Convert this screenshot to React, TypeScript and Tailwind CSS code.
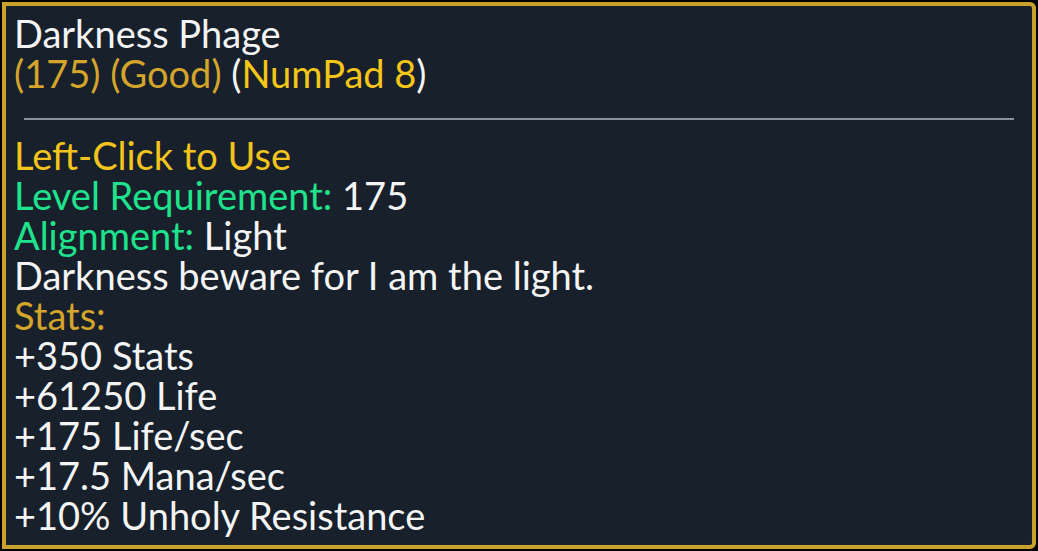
export default function App() {
  const stats = ["+350 Stats", "+61250 Life", "+175 Life/sec", "+17.5 Mana/sec", "+10% Unholy Resistance"];
  return (
    <div className="w-[1038px] h-[551px] bg-black p-[2px]">
      <div className="h-full border-[4px] border-[#c9a22e] rounded-tr-[6px] rounded-br-[6px] bg-[#17202b] px-[8px] pt-[7px] font-['Lato',sans-serif] text-[38px] leading-[40px] text-[#f4f4f4]">
        <div>Darkness Phage</div>
        <div>
          <span className="text-[#d4a52a]">(175) (Good)</span> (<span className="text-[#f5c518]">NumPad 8</span>)
        </div>
        <div className="mx-[10px] mt-[25px] mb-[15px] h-[2px] bg-[#8b9099]" />
        <div className="text-[#f2c41c]">Left-Click to Use</div>
        <div>
          <span className="text-[#1fe38c]">Level Requirement:</span> 175
        </div>
        <div>
          <span className="text-[#1fe38c]">Alignment:</span> Light
        </div>
        <div>Darkness beware for I am the light.</div>
        <div className="text-[#d4a52a]">Stats:</div>
        {stats.map((s) => (
          <div key={s}>{s}</div>
        ))}
      </div>
    </div>
  );
}
